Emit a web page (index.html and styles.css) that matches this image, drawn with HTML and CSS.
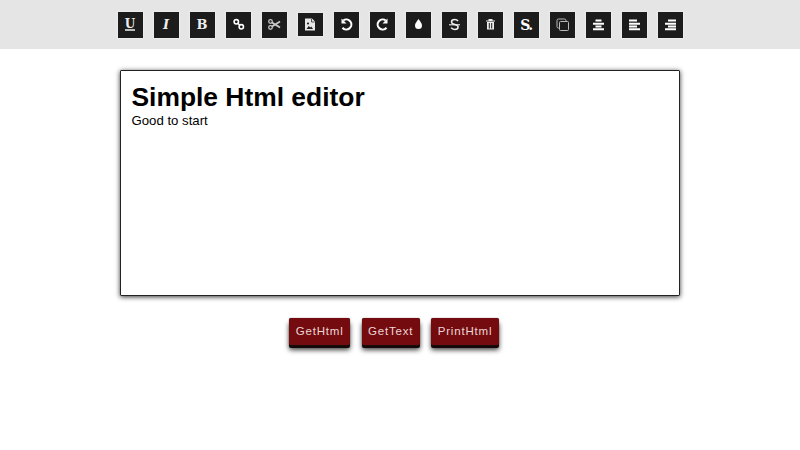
FILE: index.html
```html
<!DOCTYPE html>
<html lang="en">
<head>
    <meta charset="UTF-8">
    <meta name="viewport" content="width=device-width, initial-scale=1.0">
    <title>Simple Html editor</title>
    <link rel="stylesheet" href="styles.css">
</head>
<body>
    <!-- Toolbar -->
    <div class="toolbar">
        <button class="tool"><span class="glyph glyph-u">U</span></button>
        <button class="tool"><span class="glyph glyph-i">I</span></button>
        <button class="tool"><span class="glyph glyph-b">B</span></button>
        <button class="tool">
            <svg viewBox="0 0 25 25"><g fill="none" stroke="#fff" stroke-width="1.6"><circle cx="10.300" cy="9.800" r="2.200"/><circle cx="15.300" cy="14.800" r="2.200"/><path d="M11.800 11.300l2 2"/></g></svg>
        </button>
        <button class="tool">
            <svg viewBox="0 0 25 25"><g fill="none" stroke="#c8c8c8"><circle cx="8.500" cy="9.500" r="1.800" stroke-width="1.300"/><circle cx="8.500" cy="15.500" r="1.800" stroke-width="1.300"/><path d="M10 10.500l8 5M10 14.500l8-5" stroke-width="1.900"/></g></svg>
        </button>
        <button class="tool tool-image">
            <svg viewBox="0 0 24 23"><path d="M7 5.500h7l3 3V17.500H7z" fill="#e8e8e8"/><path d="M13.500 6v3h3" fill="none" stroke="#444" stroke-width=".9"/><path d="M8.500 16l2.300-3 1.500 1.500 1-1 1.700 2.500z" fill="#222"/><circle cx="10" cy="10.500" r="1.100" fill="#222"/></svg>
        </button>
        <button class="tool">
            <svg viewBox="0 0 25 25"><path d="M9.300 8.500a5 5 0 1 1-.8 7.200" fill="none" stroke="#fff" stroke-width="2.100"/><path d="M7.500 6.500v5h5z" fill="#fff"/></svg>
        </button>
        <button class="tool">
            <svg viewBox="0 0 25 25"><path d="M15.700 8.500a5 5 0 1 0 .8 7.200" fill="none" stroke="#fff" stroke-width="2.100"/><path d="M17.500 6.500v5h-5z" fill="#fff"/></svg>
        </button>
        <button class="tool">
            <svg viewBox="0 0 25 25"><path d="M12.500 7c2.200 3 3.500 4.500 3.500 6.500a3.500 3.500 0 0 1-7 0c0-2 1.300-3.500 3.500-6.500z" fill="#fff"/></svg>
        </button>
        <button class="tool">
            <svg viewBox="0 0 25 25"><path d="M16 9.200c-.6-1.100-1.900-1.700-3.300-1.700-1.900 0-3.200 1-3.200 2.400 0 3.300 6.600 2 6.600 5.100 0 1.600-1.500 2.500-3.400 2.500-1.500 0-2.800-.6-3.600-1.800" fill="none" stroke="#eee" stroke-width="1.500"/><path d="M7 12.800h11" stroke="#eee" stroke-width="1.100"/></svg>
        </button>
        <button class="tool">
            <svg viewBox="0 0 25 25"><path d="M8 8.500h9v1H8zM10.500 7h4v1.500h-4z" fill="#eee"/><path d="M9 10h7v7.500H9zM10.800 11v5.500h1V11zM13.200 11v5.500h1V11z" fill="#eee" fill-rule="evenodd"/></svg>
        </button>
        <button class="tool"><span class="glyph glyph-s">S.</span></button>
        <button class="tool">
            <svg viewBox="0 0 25 25"><g fill="#1c1c1c" stroke="#bbb" stroke-width="1"><rect x="7" y="7" width="9" height="9" rx="1.500"/><rect x="9.500" y="9.500" width="9" height="9" rx="1"/></g></svg>
        </button>
        <button class="tool">
            <svg viewBox="0 0 25 25"><path d="M9.500 8.500h6M7 11.800h11M9.500 14.500h6M7 17.200h11" stroke="#fff" stroke-width="2"/></svg>
        </button>
        <button class="tool">
            <svg viewBox="0 0 25 25"><path d="M7 8.500h8M7 11.800h11M7 14.500h8M7 17.200h11" stroke="#fff" stroke-width="2"/></svg>
        </button>
        <button class="tool">
            <svg viewBox="0 0 25 25"><path d="M10 8.500h8M7 11.800h11M10 14.500h8M7 17.200h11" stroke="#fff" stroke-width="2"/></svg>
        </button>
    </div>

    <!-- Editor -->
    <div class="editor" contenteditable="true">
        <h1>Simple Html editor</h1>
        <div class="editor-line">Good to start</div>
    </div>

    <!-- Actions -->
    <div class="actions">
        <button class="action">GetHtml</button>
        <button class="action">GetText</button>
        <button class="action">PrintHtml</button>
    </div>
</body>
</html>
```

FILE: styles.css
```css
html, body {
    min-height: 100vh;
}

body {
    margin: 0;
    background-color: #fff;
    font-family: 'Liberation Sans', Arial, sans-serif;
}

.toolbar {
    display: flex;
    justify-content: center;
    align-items: center;
    gap: 11px;
    height: 49px;
    background-color: #e5e5e5;
}

.tool {
    display: flex;
    justify-content: center;
    align-items: center;
    width: 25px;
    height: 26px;
    padding: 0;
    border: none;
    background-color: #1c1c1c;
    box-shadow: 0 0 2px rgba(255, 255, 255, 0.9);
}

.tool svg {
    display: block;
    width: 25px;
    height: 25px;
}

.tool-image {
    height: 23px;
}

.tool-image svg {
    width: 24px;
    height: 23px;
}

.glyph {
    color: #eee;
    font-family: 'DejaVu Serif', serif;
    font-weight: bold;
    font-size: 13px;
    line-height: 1;
}

.glyph-u {
    border-bottom: 2px solid #bbb;
    font-size: 12px;
    line-height: 10px;
}

.glyph-i {
    font-style: italic;
}

.glyph-s {
    font-size: 14px;
    letter-spacing: -1.5px;
    color: #fff;
}

.editor {
    box-sizing: border-box;
    width: 560px;
    height: 226px;
    margin: 21px auto 0;
    padding: 11px 10.5px;
    border: 1px solid #222;
    border-radius: 1px;
    box-shadow: 0 1px 5px rgba(0, 0, 0, 0.8);
    font-size: 13.2px;
    color: #000;
}

.editor h1 {
    margin: 0;
    font-size: 26.4px;
    line-height: 30px;
}

.editor-line {
    line-height: 17px;
}

.actions {
    display: flex;
    justify-content: center;
    gap: 11.5px;
    margin-top: 22px;
    padding-right: 12px;
}

.action {
    height: 27px;
    padding: 0 6.5px 2px;
    border: none;
    border-radius: 2px;
    background-color: #730b0f;
    color: #ecd6d6;
    font-family: 'Liberation Sans', Arial, sans-serif;
    font-size: 11.5px;
    letter-spacing: 0.8px;
    box-shadow: 0 0 1px #333, 0 3px 0 #140808, 0 5px 5px rgba(0, 0, 0, 0.75);
}
```
